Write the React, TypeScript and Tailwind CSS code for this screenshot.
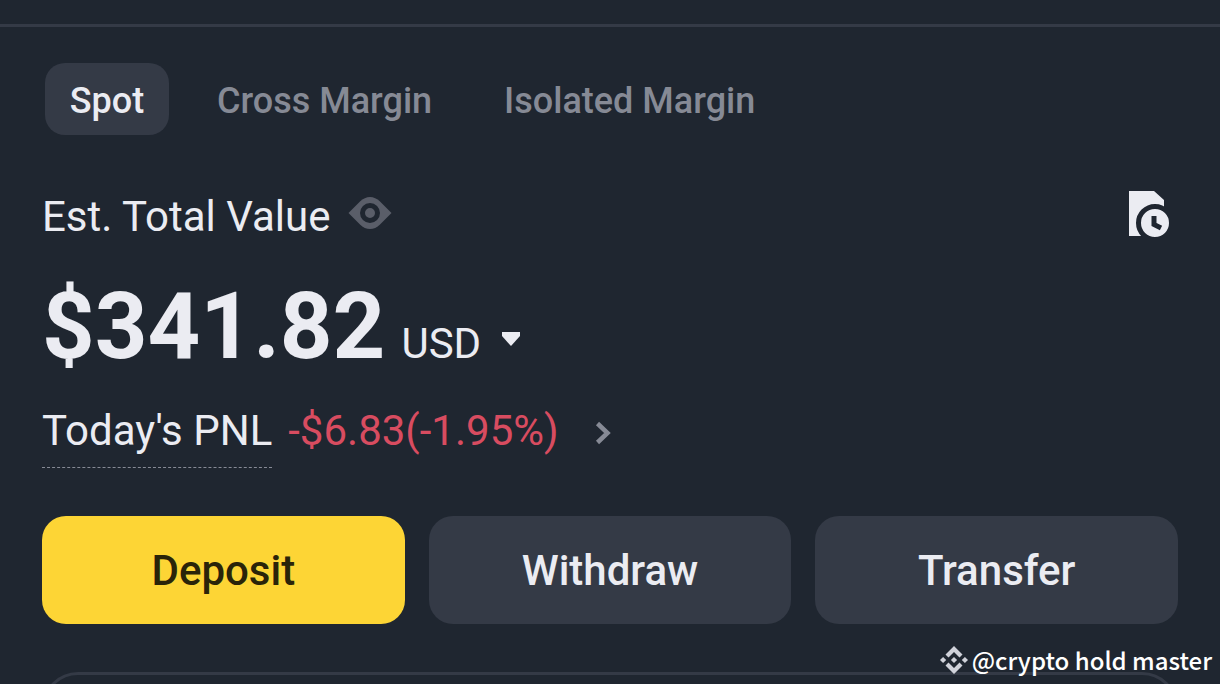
const tabs = ["Spot", "Cross Margin", "Isolated Margin"];

const actions = [
  { label: "Deposit", primary: true },
  { label: "Withdraw", primary: false },
  { label: "Transfer", primary: false },
];

function EyeIcon() {
  return (
    <svg width="44" height="34" viewBox="0 0 44 34" fill="none" aria-hidden="true">
      <path
        d="M0.5 17L12 5.5C18 -0.5 26 -0.5 32 5.5L43.500 17L32 28.500C26 34.500 18 34.500 12 28.500Z"
        fill="#5a5e69"
      />
      <circle cx="22" cy="17" r="7.500" fill="#5a5e69" stroke="#1f2630" strokeWidth="5" />
    </svg>
  );
}

function HistoryIcon() {
  return (
    <svg width="42" height="48" viewBox="0 0 42 48" fill="none" aria-hidden="true">
      <path d="M1 1H26L36 10V30H18V46H1Z" fill="#ebecf2" />
      <circle cx="27" cy="33" r="16.500" fill="#ebecf2" stroke="#1f2630" strokeWidth="5" />
      <path d="M26 26V34.500L33 38" stroke="#1f2630" strokeWidth="5" />
    </svg>
  );
}

function BrandMark() {
  return (
    <svg width="28" height="28" viewBox="0 0 28 28" fill="#d0d2da" aria-hidden="true">
      <path d="M14 0L22.500 8.500L19.500 11.500L14 6L8.500 11.500L5.500 8.500Z" />
      <path d="M14 28L22.500 19.500L19.500 16.500L14 22L8.500 16.500L5.500 19.500Z" />
      <path d="M14 10.900L17.100 14L14 17.100L10.900 14Z" />
      <path d="M3.100 10.900L6.200 14L3.100 17.100L0 14Z" />
      <path d="M24.900 10.900L28 14L24.900 17.100L21.800 14Z" />
    </svg>
  );
}

export default function App() {
  return (
    <main className="relative flex h-screen flex-col overflow-hidden bg-[#1f2630] font-['Roboto','Liberation_Sans',sans-serif] text-[#ebecf2]">
      <div className="h-[27px] shrink-0 border-b-3 border-[#343a46]" />

      <div className="flex flex-1 flex-col px-[42px] pt-9">
        <nav className="flex items-center gap-6 pl-[3px]">
          {tabs.map((tab, i) => (
            <button
              key={tab}
              type="button"
              className={
                i === 0
                  ? "h-[72px] min-w-[124px] rounded-[20px] bg-[#343a46] px-6 pt-1 text-[36px] font-medium"
                  : "h-[72px] px-6 pt-1 text-[36px] font-medium text-[#868a95]"
              }
            >
              {tab}
            </button>
          ))}
        </nav>

        <section className="mt-[52px] flex items-center justify-between pr-2">
          <div className="flex items-center gap-[18px]">
            <h2 className="pt-0.5 text-[42px] leading-[56px]">Est. Total Value</h2>
            <button type="button" aria-label="Hide balance" className="pb-1.5">
              <EyeIcon />
            </button>
          </div>
          <button type="button" aria-label="History" className="pb-1">
            <HistoryIcon />
          </button>
        </section>

        <div className="mt-7 flex items-baseline gap-4">
          <span className="text-[92px] leading-[108px] font-bold">$341.82</span>
          <button type="button" className="flex items-center gap-5 text-[42px] leading-[48px]">
            USD
            <svg className="mb-2.5" width="20" height="16" viewBox="0 0 20 16" fill="#ebecf2" aria-hidden="true">
              <path d="M1 1H19V5L10 15L1 5Z" />
            </svg>
          </button>
        </div>

        <div className="mt-[22px] flex items-start gap-4 text-[42px] leading-[56px]">
          <span className="border-b border-dashed border-[#868a95] pb-2">Today's PNL</span>
          <button type="button" className="flex items-center gap-9 text-[#d84c60]">
            -$6.83(-1.95%)
            <svg className="mt-1" width="16" height="24" viewBox="0 0 16 24" fill="none" aria-hidden="true">
              <path d="M2.500 2.500L12.500 12L2.500 21.500" stroke="#868a95" strokeWidth="4.500" />
            </svg>
          </button>
        </div>

        <div className="mt-12 grid grid-cols-3 gap-6">
          {actions.map((a) => (
            <button
              key={a.label}
              type="button"
              className={
                a.primary
                  ? "h-[108px] rounded-3xl bg-[#fdd535] text-[42px] font-medium text-[#2a2409]"
                  : "h-[108px] rounded-3xl bg-[#343a46] text-[42px] font-medium"
              }
            >
              {a.label}
            </button>
          ))}
        </div>

        <div className="mt-12 h-24 shrink-0 rounded-[36px] border-3 border-[#343a46]" />
      </div>

      <div className="absolute right-2 bottom-1 flex items-center gap-1 font-['Noto_Sans_CJK_SC',sans-serif] text-[24px] leading-10 font-medium text-white">
        <BrandMark />
        <span>@crypto hold master</span>
      </div>
    </main>
  );
}
